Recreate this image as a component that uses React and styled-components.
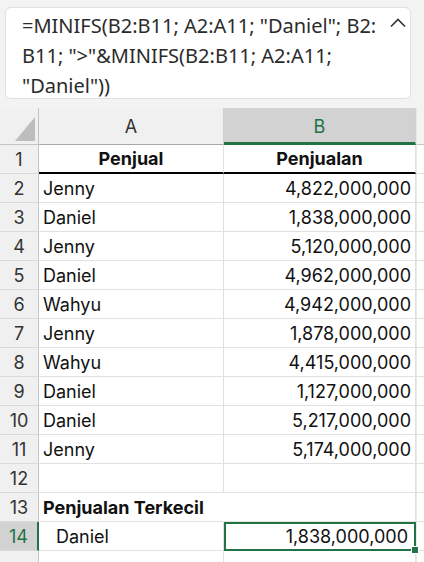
import styled, { createGlobalStyle } from "styled-components";

const GlobalStyle = createGlobalStyle`
  html, body {
    margin: 0;
    padding: 0;
    background: #ffffff;
  }
  * { box-sizing: border-box; }
`;

const green = "#217346";
const grid = "#e1e1e1";

const Page = styled.div`
  width: 424px;
  height: 562px;
  overflow: hidden;
  font-family: Inter, "Noto Sans", sans-serif;
  background: #ffffff;
`;

const FormulaBar = styled.div`
  background: #f3f3f3;
  padding: 7px 13px 9px 5px;
`;

const FormulaBox = styled.div`
  height: 92px;
  background: #ffffff;
  border: 1px solid #e0e0e0;
  border-radius: 6px;
  display: flex;
  justify-content: space-between;
  padding: 3px 4px 0 16px;
`;

const FormulaText = styled.div`
  font-family: "Noto Sans", sans-serif;
  font-size: 20px;
  line-height: 30px;
  color: #2b2b2b;
  white-space: nowrap;
`;

const Chevron = styled.svg`
  width: 16px;
  height: 10px;
  margin-top: 7px;
  flex: none;
`;

const Sheet = styled.div`
  display: grid;
  grid-template-columns: 39px 185px 192px 1fr;
  grid-template-rows: 37px;
  grid-auto-rows: 29px;
  font-size: 18px;
  color: #111111;
`;

const Corner = styled.div`
  background: #f0f0f0;
  border-right: 1px solid #c4c4c4;
  border-bottom: 1px solid #c4c4c4;
  display: flex;
  align-items: flex-end;
  justify-content: flex-end;
  padding: 0 3px 3px 0;
`;

const ColHead = styled.div`
  background: ${(p) => (p.$active ? "#d2d2d2" : "#f0f0f0")};
  color: ${(p) => (p.$active ? green : "#333333")};
  border-right: 1px solid #d0d0d0;
  border-bottom: ${(p) => (p.$active ? `3px solid ${green}` : "1px solid #a8a8a8")};
  display: flex;
  align-items: center;
  justify-content: center;
  font-size: 18px;
  padding-top: ${(p) => (p.$active ? "2px" : "0")};
`;

const Filler = styled.div`
  background: ${(p) => (p.$head ? "#f3f3f3" : "#ffffff")};
  border-left: 1px solid #e8e8e8;
  border-bottom: 1px solid ${(p) => (p.$head ? "#c4c4c4" : grid)};
`;

const RowHead = styled.div`
  background: ${(p) => (p.$active ? "#d2d2d2" : "#f0f0f0")};
  color: ${(p) => (p.$active ? green : "#333333")};
  border-right: ${(p) => (p.$active ? `2px solid ${green}` : "1px solid #c4c4c4")};
  border-bottom: 1px solid #dadada;
  display: flex;
  align-items: center;
  justify-content: center;
  font-size: 18px;
`;

const Cell = styled.div`
  position: relative;
  display: flex;
  align-items: center;
  justify-content: ${(p) => p.$align || "flex-start"};
  padding: 0 4px 0 ${(p) => p.$indent || "4px"};
  font-weight: ${(p) => (p.$bold ? 700 : 400)};
  white-space: nowrap;
  border-right: 1px solid ${(p) => (p.$noRight ? "transparent" : grid)};
  border-bottom: ${(p) => (p.$underline ? "2px solid #000000" : `1px solid ${grid}`)};
  ${(p) =>
    p.$selected &&
    `
    z-index: 1;
    border: 2px solid ${green};
    padding-right: 6px;
  `}
`;

const FillHandle = styled.span`
  position: absolute;
  right: -5px;
  bottom: -5px;
  width: 8px;
  height: 8px;
  background: ${green};
  border: 1px solid #ffffff;
`;

const rows = [
  ["Jenny", "4,822,000,000"],
  ["Daniel", "1,838,000,000"],
  ["Jenny", "5,120,000,000"],
  ["Daniel", "4,962,000,000"],
  ["Wahyu", "4,942,000,000"],
  ["Jenny", "1,878,000,000"],
  ["Wahyu", "4,415,000,000"],
  ["Daniel", "1,127,000,000"],
  ["Daniel", "5,217,000,000"],
  ["Jenny", "5,174,000,000"],
];

const App = () => {
  return (
    <Page>
      <GlobalStyle />
      <FormulaBar>
        <FormulaBox>
          <FormulaText>
            =MINIFS(B2:B11; A2:A11; "Daniel"; B2:
            <br />
            B11; "&gt;"&amp;MINIFS(B2:B11; A2:A11;
            <br />
            "Daniel"))
          </FormulaText>
          <Chevron viewBox="0 0 16 10">
            <path d="M1 8.5 L8 1.5 L15 8.5" fill="none" stroke="#333" strokeWidth="1.6" />
          </Chevron>
        </FormulaBox>
      </FormulaBar>

      <Sheet>
        <Corner>
          <svg width="20" height="24" viewBox="0 0 20 24">
            <polygon points="20,0 20,24 0,24" fill="#bdbdbd" />
          </svg>
        </Corner>
        <ColHead>A</ColHead>
        <ColHead $active>B</ColHead>
        <Filler $head />

        <RowHead>1</RowHead>
        <Cell $bold $align="center" $underline>Penjual</Cell>
        <Cell $bold $align="center" $underline>Penjualan</Cell>
        <Filler />

        {rows.map(([name, value], i) => (
          <Row key={i} n={i + 2} name={name} value={value} />
        ))}

        <RowHead>12</RowHead>
        <Cell />
        <Cell />
        <Filler />

        <RowHead>13</RowHead>
        <Cell $bold $noRight>Penjualan Terkecil</Cell>
        <Cell />
        <Filler />

        <RowHead $active>14</RowHead>
        <Cell $indent="17px">Daniel</Cell>
        <Cell $align="flex-end" $selected>
          1,838,000,000
          <FillHandle />
        </Cell>
        <Filler />

        <RowHead />
        <Cell />
        <Cell />
        <Filler />
      </Sheet>
    </Page>
  );
};

const Row = ({ n, name, value }) => (
  <>
    <RowHead>{n}</RowHead>
    <Cell>{name}</Cell>
    <Cell $align="flex-end">{value}</Cell>
    <Filler />
  </>
);

export default App;
